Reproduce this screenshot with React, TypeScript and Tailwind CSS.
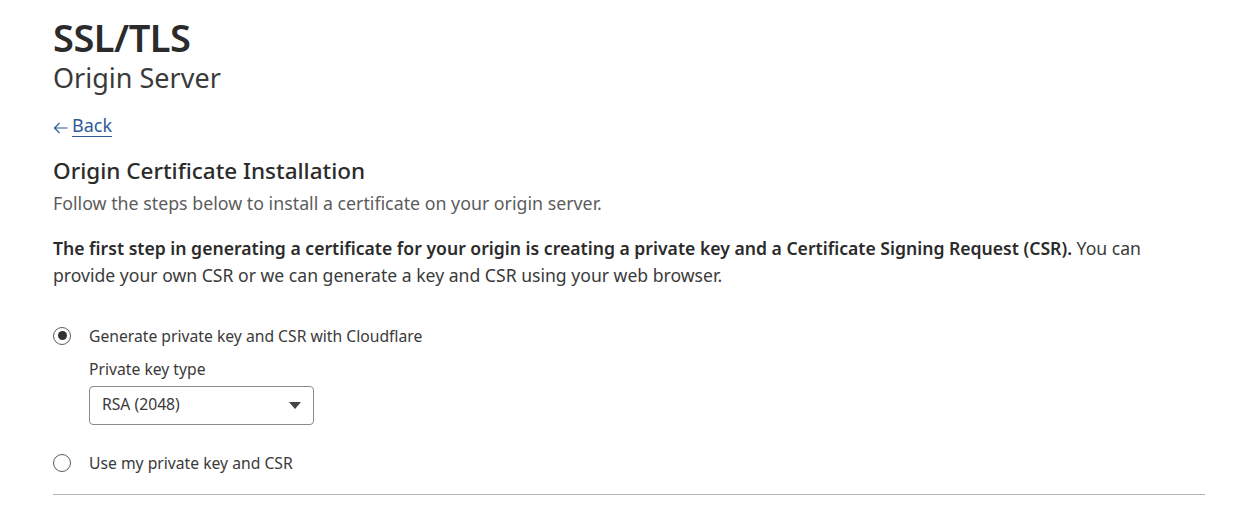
export default function App() {
  return (
    <div className="min-h-[517px] bg-white pl-[53px] pr-[50px] pt-[12px] text-[#313131]" style={{ fontFamily: '"Noto Sans", "Open Sans", sans-serif' }}>
      <h1 className="text-[38px] font-semibold leading-[50px] tracking-[-0.5px] text-[#2b2b2b]">SSL/TLS</h1>
      <h2 className="text-[27px] leading-[32px] text-[#3a3a3a]">Origin Server</h2>

      <a href="#" className="mt-[20px] inline-flex items-center gap-[4px] text-[18px] leading-[24px] text-[#2c5b98]">
        <svg width="15" height="12" viewBox="0 0 15 12" className="mt-[4px]">
          <path d="M14.5 6H1.5M6.5 1L1.5 6l5 5" fill="none" stroke="#2c5b98" strokeWidth="1.2" />
        </svg>
        <span className="border-b border-[#2c5b98] leading-[22px]">Back</span>
      </a>

      <h3 className="mt-[16px] text-[22.5px] font-medium leading-[30px] text-[#2b2b2b]">Origin Certificate Installation</h3>
      <p className="mt-[2px] text-[17.8px] leading-[30px] text-[#5c5c5c]">Follow the steps below to install a certificate on your origin server.</p>

      <p className="mt-[17px] text-[17.6px] leading-[27px] text-[#3a3a3a]">
        <span className="font-semibold text-[#2b2b2b]">The first step in generating a certificate for your origin is creating a private key and a Certificate Signing Request (CSR).</span>{' '}
        You can provide your own CSR or we can generate a key and CSR using your web browser.
      </p>

      <div className="mt-[35px] flex items-center gap-[18px]">
        <span className="flex h-[18px] w-[18px] items-center justify-center rounded-full border border-[#5c5c5c]">
          <span className="h-[9px] w-[9px] rounded-full bg-[#333]" />
        </span>
        <span className="text-[15.7px] leading-[24px] text-[#3a3a3a]">Generate private key and CSR with Cloudflare</span>
      </div>

      <div className="ml-[36px] mt-[9px]">
        <div className="text-[15.7px] leading-[24px] text-[#3a3a3a]">Private key type</div>
        <div className="mt-[5px] flex h-[39px] w-[225px] items-center justify-between rounded-[4px] border border-[#8a8a8a] pl-[12px] pr-[12px]">
          <span className="text-[15.7px] text-[#3a3a3a]">RSA (2048)</span>
          <svg width="12" height="7" viewBox="0 0 12 7"><path d="M0 0h12L6 7z" fill="#444" /></svg>
        </div>
      </div>

      <div className="mt-[26px] flex items-center gap-[18px]">
        <span className="h-[18px] w-[18px] rounded-full border border-[#5c5c5c]" />
        <span className="text-[15.7px] leading-[24px] text-[#3a3a3a]">Use my private key and CSR</span>
      </div>

      <div className="mt-[19px] w-[1152px] border-t border-[#b5b5b5]" />
    </div>
  );
}
